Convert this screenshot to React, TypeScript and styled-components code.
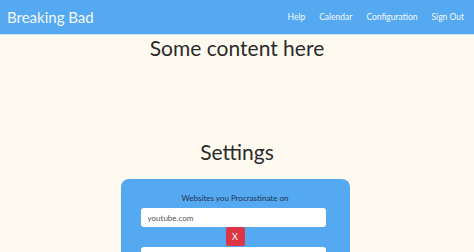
import React, { useState } from "react";
import styled, { createGlobalStyle } from "styled-components";

//STYLES
const GlobalStyle = createGlobalStyle`
  body {
    margin: 0;
    background: #fffaf0;
    font-family: Lato, "Open Sans", sans-serif;
    color: #2b2b2b;
  }
`;

const Navbar = styled.nav`
  height: 34px;
  background: #55a9f0;
  display: flex;
  flex-direction: row;
  justify-content: space-between;
  align-items: center;
  padding: 0 10px 0 7px;
  border-bottom: 1px solid #c9e2f7;
`;

const Brand = styled.div`
  font-size: 15px;
  color: #f2f8fe;
`;

const Links = styled.div`
  display: flex;
  flex-direction: row;
  align-items: center;
  gap: 14px;
`;

const NavLink = styled.a`
  font-size: 8.5px;
  color: #f2f8fe;
  text-decoration: none;
`;

const Main = styled.main`
  display: flex;
  flex-direction: column;
  align-items: center;
`;

const Heading = styled.h1<{ $top: number }>`
  margin: ${(p) => p.$top}px 0 0 0;
  font-size: 21px;
  line-height: 26px;
  font-weight: 400;
  color: #2b2b2b;
`;

const Card = styled.div`
  margin: 14px 4px 0 0;
  width: 229px;
  background: #55a9f0;
  border-radius: 8px;
  padding: 14px 0 10px 0;
  display: flex;
  flex-direction: column;
  align-items: center;
`;

const Label = styled.div`
  font-size: 8px;
  color: #1e3350;
  margin-bottom: 5px;
`;

const SiteInput = styled.input`
  box-sizing: border-box;
  width: 185px;
  height: 19px;
  margin-right: 4px;
  border: none;
  border-radius: 3px;
  padding: 0 7px;
  font-family: Lato, "Open Sans", sans-serif;
  font-size: 8px;
  color: #555;
  background: #fff;
  outline: none;
`;

const RemoveButton = styled.button`
  width: 19px;
  height: 19px;
  border: none;
  border-radius: 2px;
  background: #dc3545;
  color: #fff;
  font-family: Lato, sans-serif;
  font-size: 9px;
  padding: 0;
  margin: 0 0 1px 0;
`;

export default function App() {
  //STATE
  const [sites, setSites] = useState(["youtube.com", ""]);

  return (
    <>
      <GlobalStyle />
      <Navbar>
        <Brand>Breaking Bad</Brand>
        <Links>
          <NavLink>Help</NavLink>
          <NavLink>Calendar</NavLink>
          <NavLink>Configuration</NavLink>
          <NavLink>Sign Out</NavLink>
        </Links>
      </Navbar>
      <Main>
        <Heading $top={0}>Some content here</Heading>
        <Heading $top={78}>Settings</Heading>
        <Card>
          <Label>Websites you Procrastinate on</Label>
          {sites.map((s, i) => (
            <React.Fragment key={i}>
              <SiteInput
                value={s}
                onChange={(e) =>
                  setSites(sites.map((x, j) => (j === i ? e.target.value : x)))
                }
              />
              <RemoveButton onClick={() => setSites(sites.filter((_, j) => j !== i))}>
                X
              </RemoveButton>
            </React.Fragment>
          ))}
        </Card>
      </Main>
    </>
  );
}
